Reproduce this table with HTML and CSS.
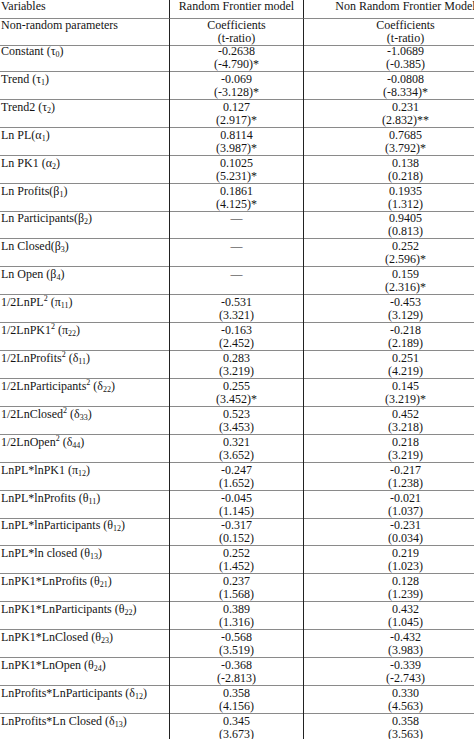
FILE: index.html
```html
<!DOCTYPE html>
<html>
<head>
<meta charset="utf-8">
<link rel="stylesheet" href="styles.css">
</head>
<body>
<div class="tbl">
  <div class="row head1">
    <div class="cell lab">Variables</div>
    <div class="cell val">Random Frontier model</div>
    <div class="cell val">Non Random Frontier Model</div>
  </div>
  <div class="row head2">
    <div class="cell lab">Non-random parameters</div>
    <div class="cell val">Coefficients<br>(t-ratio)</div>
    <div class="cell val">Coefficients<br>(t-ratio)</div>
  </div>

  <div class="row"><div class="cell lab">Constant (τ<sub>0</sub>)</div><div class="cell val">-0.2638<br>(-4.790)*</div><div class="cell val">-1.0689<br>(-0.385)</div></div>
  <div class="row"><div class="cell lab">Trend (τ<sub>1</sub>)</div><div class="cell val">-0.069<br>(-3.128)*</div><div class="cell val">-0.0808<br>(-8.334)*</div></div>
  <div class="row"><div class="cell lab">Trend2 (τ<sub>2</sub>)</div><div class="cell val">0.127<br>(2.917)*</div><div class="cell val">0.231<br>(2.832)**</div></div>
  <div class="row"><div class="cell lab">Ln PL(α<sub>1</sub>)</div><div class="cell val">0.8114<br>(3.987)*</div><div class="cell val">0.7685<br>(3.792)*</div></div>
  <div class="row"><div class="cell lab">Ln PK1 (α<sub>2</sub>)</div><div class="cell val">0.1025<br>(5.231)*</div><div class="cell val">0.138<br>(0.218)</div></div>
  <div class="row"><div class="cell lab">Ln Profits(β<sub>1</sub>)</div><div class="cell val">0.1861<br>(4.125)*</div><div class="cell val">0.1935<br>(1.312)</div></div>
  <div class="row"><div class="cell lab">Ln Participants(β<sub>2</sub>)</div><div class="cell val">—</div><div class="cell val">0.9405<br>(0.813)</div></div>
  <div class="row"><div class="cell lab">Ln Closed(β<sub>3</sub>)</div><div class="cell val">—</div><div class="cell val">0.252<br>(2.596)*</div></div>
  <div class="row"><div class="cell lab">Ln Open (β<sub>4</sub>)</div><div class="cell val">—</div><div class="cell val">0.159<br>(2.316)*</div></div>
  <div class="row"><div class="cell lab">1/2LnPL<sup>2</sup> (π<sub>11</sub>)</div><div class="cell val">-0.531<br>(3.321)</div><div class="cell val">-0.453<br>(3.129)</div></div>
  <div class="row"><div class="cell lab">1/2LnPK1<sup>2</sup> (π<sub>22</sub>)</div><div class="cell val">-0.163<br>(2.452)</div><div class="cell val">-0.218<br>(2.189)</div></div>
  <div class="row"><div class="cell lab">1/2LnProfits<sup>2</sup> (δ<sub>11</sub>)</div><div class="cell val">0.283<br>(3.219)</div><div class="cell val">0.251<br>(4.219)</div></div>
  <div class="row"><div class="cell lab">1/2LnParticipants<sup>2</sup> (δ<sub>22</sub>)</div><div class="cell val">0.255<br>(3.452)*</div><div class="cell val">0.145<br>(3.219)*</div></div>
  <div class="row"><div class="cell lab">1/2LnClosed<sup>2</sup> (δ<sub>33</sub>)</div><div class="cell val">0.523<br>(3.453)</div><div class="cell val">0.452<br>(3.218)</div></div>
  <div class="row"><div class="cell lab">1/2LnOpen<sup>2</sup> (δ<sub>44</sub>)</div><div class="cell val">0.321<br>(3.652)</div><div class="cell val">0.218<br>(3.219)</div></div>
  <div class="row"><div class="cell lab">LnPL*lnPK1 (π<sub>12</sub>)</div><div class="cell val">-0.247<br>(1.652)</div><div class="cell val">-0.217<br>(1.238)</div></div>
  <div class="row"><div class="cell lab">LnPL*lnProfits (θ<sub>11</sub>)</div><div class="cell val">-0.045<br>(1.145)</div><div class="cell val">-0.021<br>(1.037)</div></div>
  <div class="row"><div class="cell lab">LnPL*lnParticipants (θ<sub>12</sub>)</div><div class="cell val">-0.317<br>(0.152)</div><div class="cell val">-0.231<br>(0.034)</div></div>
  <div class="row"><div class="cell lab">LnPL*ln closed (θ<sub>13</sub>)</div><div class="cell val">0.252<br>(1.452)</div><div class="cell val">0.219<br>(1.023)</div></div>
  <div class="row"><div class="cell lab">LnPK1*LnProfits (θ<sub>21</sub>)</div><div class="cell val">0.237<br>(1.568)</div><div class="cell val">0.128<br>(1.239)</div></div>
  <div class="row"><div class="cell lab">LnPK1*LnParticipants (θ<sub>22</sub>)</div><div class="cell val">0.389<br>(1.316)</div><div class="cell val">0.432<br>(1.045)</div></div>
  <div class="row"><div class="cell lab">LnPK1*LnClosed (θ<sub>23</sub>)</div><div class="cell val">-0.568<br>(3.519)</div><div class="cell val">-0.432<br>(3.983)</div></div>
  <div class="row"><div class="cell lab">LnPK1*LnOpen (θ<sub>24</sub>)</div><div class="cell val">-0.368<br>(-2.813)</div><div class="cell val">-0.339<br>(-2.743)</div></div>
  <div class="row"><div class="cell lab">LnProfits*LnParticipants (δ<sub>12</sub>)</div><div class="cell val">0.358<br>(4.156)</div><div class="cell val">0.330<br>(4.563)</div></div>
  <div class="row"><div class="cell lab">LnProfits*Ln Closed (δ<sub>13</sub>)</div><div class="cell val">0.345<br>(3.673)</div><div class="cell val">0.358<br>(3.563)</div></div>
</div>
</body>
</html>
```

FILE: styles.css
```css
html, body {
  margin: 0;
  padding: 0;
  background: #fff;
  overflow: hidden;
}

body {
  font-family: "Liberation Serif", "Times New Roman", serif;
  font-size: 12px;
  line-height: 13px;
  color: #141414;
}

.tbl {
  width: 507px;
}

.row {
  display: grid;
  grid-template-columns: 170px 134px 203px;
  height: 27.92px;
  box-sizing: border-box;
}

.row.head1 {
  height: 19px;
}

.row.head2 {
  height: 23px;
}

.cell {
  box-sizing: border-box;
  border-bottom: 1.5px solid #8a8a8a;
  padding-top: 3px;
  white-space: nowrap;
  overflow: visible;
}

.cell:not(:last-child) {
  border-right: 1px solid #222;
}

.head1 .cell {
  padding-top: 0;
}

.head2 .cell {
  padding-top: 0;
}

.lab {
  padding-left: 1px;
}

.val {
  text-align: center;
}

sub {
  font-size: 8px;
  line-height: 0;
  vertical-align: -2px;
}

sup {
  font-size: 8px;
  line-height: 0;
  vertical-align: 5px;
}
```
